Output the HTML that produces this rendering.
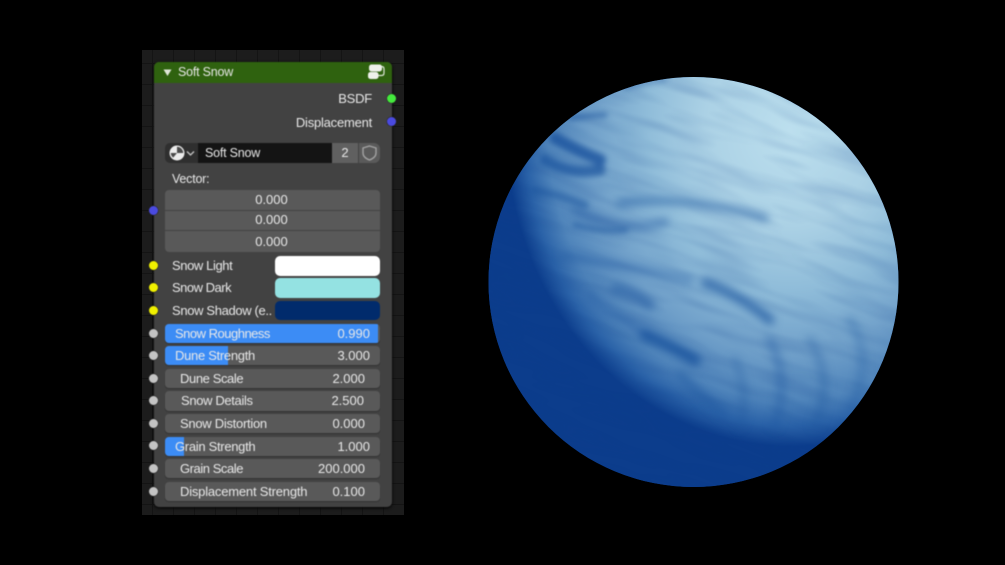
<!DOCTYPE html>
<html><head><meta charset="utf-8"><style>
html,body{margin:0;padding:0;background:#000;width:1005px;height:565px;overflow:hidden}
#wrap{position:relative;width:1005px;height:565px;overflow:hidden;font-family:"Liberation Sans",sans-serif;color:#e8e8e8;font-size:13px}
#bg{position:absolute;left:142px;top:50px;width:262px;height:465px;background-color:#1c1c1c;
background-image:linear-gradient(#141414 1px,transparent 1px),linear-gradient(90deg,#141414 1px,transparent 1px);background-size:21px 21px;background-position:10px 13px}
#ui{position:absolute;left:0;top:0;width:1005px;height:560px;filter:blur(.42px)}
.a{position:absolute;white-space:nowrap}
.t{position:absolute;white-space:nowrap;line-height:16px;height:16px}
.l{letter-spacing:-.22px}
.r{text-align:right}
.b{position:absolute;left:165px;width:215px;background:#595959;border-radius:4px;overflow:hidden;box-shadow:0 1px 1px #333}
.f{position:absolute;left:0;top:0;bottom:0;background:#3c8cf5}
.d{position:absolute;width:9px;height:9px;border-radius:50%;box-shadow:0 0 0 .5px #222}
.g{background:#c4c4c4}.y{background:#f0f000}
.s{position:absolute;left:275px;width:105px;border-radius:5px}
</style></head><body><div id="wrap">
<div id="bg"></div>
<div id="ui">
<div class="a" style="left:154px;top:62px;width:238px;height:445px;background:#424242;border-radius:5px;box-shadow:0 1px 3px #000"></div>
<div class="a" style="left:154px;top:62px;width:238px;height:21px;background:#2f620f;border-radius:5px 5px 0 0"></div>
<svg class="a" style="left:163px;top:68px" width="10" height="9"><path d="M0.5 1.5H8.5L4.5 8Z" fill="#dfe6d8"/></svg>
<div class="t l" style="left:178px;top:64px;font-size:12.5px">Soft Snow</div>
<svg class="a" style="left:366px;top:62px" width="20" height="20" viewBox="0 0 20 20"><path d="M14 4.5H15.5Q18 4.5 18 7V11Q18 13.5 15.5 13.5H12" fill="none" stroke="#dfe6d8" stroke-width="1.2"/><rect x="3" y="2.5" width="13" height="7" rx="2.5" fill="#eef0ea"/><rect x="2" y="10" width="10.5" height="7" rx="2.5" fill="#eef0ea"/></svg>

<div class="t r l" style="left:280px;width:92px;top:91px">BSDF</div>
<div class="t r l" style="left:260px;width:112px;top:115px">Displacement</div>
<div class="d" style="left:387px;top:94px;background:#44e93d"></div>
<div class="d" style="left:387px;top:117px;background:#4a4ae0"></div>

<div class="a" style="left:165px;top:143px;width:33px;height:20px;background:#2f2f2f;border-radius:5px 0 0 5px"></div>
<svg class="a" style="left:168px;top:144px" width="30" height="18" viewBox="0 0 30 18"><circle cx="9" cy="9" r="7.5" fill="#ececec"/><path d="M9 2.8A6.2 6.2 0 0 1 15.2 9H9Z" fill="#4a4a4a"/><path d="M9 9H2.8A6.2 6.2 0 0 0 5.2 13.6L9 9Z" fill="#4a4a4a"/><path d="M19 7.5L22.5 11L26 7.5" fill="none" stroke="#c4c4c4" stroke-width="1.3"/></svg>
<div class="a" style="left:198px;top:143px;width:134px;height:20px;background:#141414"></div>
<div class="t l" style="left:205px;top:145px;font-size:12.5px">Soft Snow</div>
<div class="a" style="left:332px;top:143px;width:26px;height:20px;background:#606060"></div>
<div class="t" style="left:332px;width:26px;text-align:center;top:145px">2</div>
<div class="a" style="left:359px;top:143px;width:21px;height:20px;background:#5a5a5a;border-radius:0 6px 6px 0"></div>
<svg class="a" style="left:361px;top:144px" width="17" height="18" viewBox="0 0 17 18"><path d="M8.5 2L15 4V9Q15 13.5 8.5 16Q2 13.5 2 9V4Z" fill="none" stroke="#a2a2a2" stroke-width="1.4"/></svg>

<div class="t l" style="left:172px;top:171px;font-size:12.5px">Vector:</div>
<div class="d" style="left:149px;top:206px;background:#4a4ae0"></div>
<div class="a" style="left:165px;top:190px;width:215px;height:20px;background:#595959;border-radius:4px 4px 0 0"></div>
<div class="a" style="left:165px;top:211px;width:215px;height:19px;background:#595959"></div>
<div class="a" style="left:165px;top:231px;width:215px;height:21px;background:#595959;border-radius:0 0 4px 4px"></div>
<div class="t" style="left:165px;width:213px;text-align:center;top:192px">0.000</div>
<div class="t" style="left:165px;width:213px;text-align:center;top:212px">0.000</div>
<div class="t" style="left:165px;width:213px;text-align:center;top:234px">0.000</div>

<div class="d y" style="left:149px;top:261px"></div>
<div class="d y" style="left:149px;top:283px"></div>
<div class="d y" style="left:149px;top:306px"></div>
<div class="t l" style="left:172px;top:258px;letter-spacing:-.4px">Snow Light</div>
<div class="t l" style="left:172px;top:280px;letter-spacing:-.5px">Snow Dark</div>
<div class="t l" style="left:172px;top:303px;letter-spacing:-.35px">Snow Shadow (e..</div>
<div class="s" style="top:256px;height:20px;background:#fff"></div>
<div class="s" style="top:278px;height:20px;background:#94e2e2"></div>
<div class="s" style="top:301px;height:19px;background:#012b6c"></div>

<div class="d g" style="left:149px;top:329px"></div>
<div class="d g" style="left:149px;top:351px"></div>
<div class="d g" style="left:149px;top:374px"></div>
<div class="d g" style="left:149px;top:396px"></div>
<div class="d g" style="left:149px;top:419px"></div>
<div class="d g" style="left:149px;top:441px"></div>
<div class="d g" style="left:149px;top:464px"></div>
<div class="d g" style="left:149px;top:487px"></div>

<div class="b" style="top:324px;height:19px"><div class="f" style="width:213px"></div></div>
<div class="t" style="left:175px;top:326px;letter-spacing:-.5px">Snow Roughness</div><div class="t r" style="left:300px;width:70px;top:326px">0.990</div>
<div class="b" style="top:346px;height:19px"><div class="f" style="width:63px"></div></div>
<div class="t" style="left:175px;top:348px;letter-spacing:-.3px">Dune Strength</div><div class="t r" style="left:300px;width:70px;top:348px">3.000</div>
<div class="b" style="top:369px;height:19px"></div>
<div class="t" style="left:180px;top:371px;letter-spacing:-.4px">Dune Scale</div><div class="t r" style="left:295px;width:70px;top:371px">2.000</div>
<div class="b" style="top:391px;height:20px"></div>
<div class="t" style="left:181px;top:393px;letter-spacing:-.35px">Snow Details</div><div class="t r" style="left:294px;width:70px;top:393px">2.500</div>
<div class="b" style="top:414px;height:19px"></div>
<div class="t" style="left:180px;top:416px;letter-spacing:-.28px">Snow Distortion</div><div class="t r" style="left:295px;width:70px;top:416px">0.000</div>
<div class="b" style="top:437px;height:19px"><div class="f" style="width:19px"></div></div>
<div class="t" style="left:175px;top:439px;letter-spacing:-.3px">Grain Strength</div><div class="t r" style="left:300px;width:70px;top:439px">1.000</div>
<div class="b" style="top:459px;height:19px"></div>
<div class="t" style="left:180px;top:461px;letter-spacing:-.45px">Grain Scale</div><div class="t r" style="left:295px;width:70px;top:461px">200.000</div>
<div class="b" style="top:482px;height:19px"></div>
<div class="t" style="left:180px;top:484px;letter-spacing:-.2px">Displacement Strength</div><div class="t r" style="left:295px;width:70px;top:484px">0.100</div>
</div>

<svg class="a" style="left:0;top:0" width="1005" height="565" viewBox="0 0 1005 565">
<defs>
<radialGradient id="lit" gradientUnits="userSpaceOnUse" cx="0" cy="0" r="1" gradientTransform="translate(790 130) scale(288 321)">
<stop offset="0" stop-color="#bcdfee"/><stop offset=".3" stop-color="#abd1e5"/><stop offset=".5" stop-color="#8fbcd9"/><stop offset=".7" stop-color="#6f9fc9"/><stop offset=".84" stop-color="#5085bb"/><stop offset=".92" stop-color="#2a62a8"/><stop offset=".985" stop-color="#0c3d8c"/>
</radialGradient>
<clipPath id="c"><circle cx="693.5" cy="282" r="205"/></clipPath>
<filter id="bl" x="-40%" y="-150%" width="180%" height="400%" color-interpolation-filters="sRGB"><feGaussianBlur stdDeviation="4.5"/></filter>
<filter id="bs" x="-40%" y="-150%" width="180%" height="400%" color-interpolation-filters="sRGB"><feGaussianBlur stdDeviation="3"/></filter>
<filter id="tb" x="0" y="0" width="100%" height="100%" color-interpolation-filters="sRGB"><feTurbulence type="fractalNoise" baseFrequency="0.012 0.07" numOctaves="2" seed="7"/><feColorMatrix values="0 0 0 0 .05 0 0 0 0 .24 0 0 0 0 .55 3 0 0 0 -1.3"/><feGaussianBlur stdDeviation="1.4"/></filter>
</defs>
<g clip-path="url(#c)">
<rect x="488" y="77" width="411" height="411" fill="#0c3d8c"/>
<rect x="488" y="77" width="411" height="411" fill="url(#lit)"/>
<g transform="rotate(18 693 282)" opacity=".14"><rect x="478" y="67" width="430" height="430" filter="url(#tb)"/></g>
<g fill="none" stroke="#1c559f" stroke-linecap="round" filter="url(#bl)">
<path d="M620 203Q690 195 765 218" stroke-width="8" opacity=".55"/>
<path d="M575 210Q620 235 665 222" stroke-width="9" opacity=".45"/>
<path d="M565 255Q620 265 690 280" stroke-width="9" opacity=".4"/>
<path d="M705 283Q740 295 770 320" stroke-width="9" opacity=".75"/>
<path d="M615 288Q635 292 650 305" stroke-width="9" opacity=".6"/>
<path d="M645 335Q670 345 695 360" stroke-width="12" opacity=".9"/>
<path d="M680 375Q700 395 725 415" stroke-width="8" opacity=".5"/>
<path d="M590 295Q620 320 650 335" stroke-width="8" opacity=".45"/>
<path d="M770 340Q790 380 775 425" stroke-width="8" opacity=".4"/>
<path d="M810 340Q835 380 815 425" stroke-width="8" opacity=".35"/>
<path d="M850 320Q875 360 850 410" stroke-width="8" opacity=".3"/>
<path d="M735 360Q750 395 740 425" stroke-width="7" opacity=".35"/>
</g>
<g fill="none" stroke="#1a539d" stroke-linecap="round" filter="url(#bs)">
<path d="M555 138Q575 150 600 160" stroke-width="12" opacity=".8"/>
<path d="M545 160Q570 175 600 170" stroke-width="11" opacity=".7"/>
<path d="M535 190Q560 195 585 205" stroke-width="8" opacity=".5"/>
<path d="M570 118Q590 115 605 115" stroke-width="5" opacity=".6"/>
<path d="M625 88Q645 82 665 80" stroke-width="4" opacity=".45"/>
<path d="M575 225Q600 232 625 230" stroke-width="6" opacity=".5"/>
</g>
</g>
</svg>
</div></body></html>
